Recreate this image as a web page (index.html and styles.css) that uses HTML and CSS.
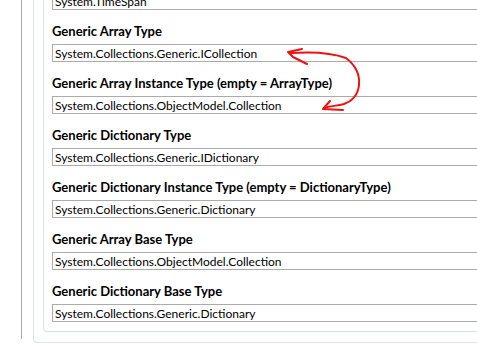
FILE: index.html
```html
<!DOCTYPE html>
<html lang="en">
<head>
    <meta charset="UTF-8">
    <title>Type Settings</title>
    <link rel="stylesheet" href="styles.css">
</head>
<body>
    <div class="rail">
        <div class="group">
            <div class="panel">
                <div class="field first">
                    <input class="type-box" type="text" value="System.TimeSpan">
                </div>
                <div class="field">
                    <label class="field-label">Generic Array Type</label>
                    <input class="type-box" type="text" value="System.Collections.Generic.ICollection">
                </div>
                <div class="field">
                    <label class="field-label">Generic Array Instance Type (empty = ArrayType)</label>
                    <input class="type-box" type="text" value="System.Collections.ObjectModel.Collection">
                </div>
                <div class="field">
                    <label class="field-label">Generic Dictionary Type</label>
                    <input class="type-box" type="text" value="System.Collections.Generic.IDictionary">
                </div>
                <div class="field">
                    <label class="field-label">Generic Dictionary Instance Type (empty = DictionaryType)</label>
                    <input class="type-box" type="text" value="System.Collections.Generic.Dictionary">
                </div>
                <div class="field">
                    <label class="field-label">Generic Array Base Type</label>
                    <input class="type-box" type="text" value="System.Collections.ObjectModel.Collection">
                </div>
                <div class="field">
                    <label class="field-label">Generic Dictionary Base Type</label>
                    <input class="type-box" type="text" value="System.Collections.Generic.Dictionary">
                </div>
            </div>
        </div>
    </div>

    <!-- hand drawn annotation on top of the form -->
    <svg class="scribble" width="477" height="347" viewBox="0 0 477 347">
        <path d="M302 49 L288 52 L293 57 L307 64" />
        <path d="M291 53 C306 52 330 52 346 58 C355 65 360 75 359 85 C358 95 352 101 344 104 C336 106 330 106 324 108" />
        <path d="M330 101 L323 109 L343 110" />
    </svg>
</body>
</html>
```

FILE: styles.css
```css
body {
    margin: 0;
    background-color: #fff;
    font-family: Lato, "Open Sans", sans-serif;
    font-size: 12px;
    color: #000;
    overflow: hidden;
    height: 347px;
    position: relative;
}
.rail {
    margin-left: 21px;
    border-left: 1px solid #a8a8a8;
    padding-left: 11px;
    height: 347px;
    box-sizing: border-box;
}
.group {
    border-left: 1px solid #dde2e6;
    border-bottom: 1px solid #dde2e6;
    border-bottom-left-radius: 4px;
    padding: 0 0 10px 9px;
}
.panel {
    border-left: 1px solid #dde2e6;
    border-bottom: 1px solid #dde2e6;
    border-bottom-left-radius: 4px;
    padding: 0 0 9px 8px;
}
.field {
    display: flex;
    flex-direction: column;
}
.field.first {
    margin-top: -8px;
}
.field-label {
    font-weight: bold;
    font-size: 13px;
    line-height: 16px;
    padding: 13px 0 5px;
}
.type-box {
    width: 480px;
    height: 18px;
    box-sizing: border-box;
    border: 1px solid #ababab;
    padding: 0 2px;
    margin: 0;
    font-family: inherit;
    font-size: 12px;
    color: #000;
    background-color: #fff;
    outline: none;
}

/* red annotation arrow */
.scribble {
    position: absolute;
    left: 0;
    top: 0;
    pointer-events: none;
}
.scribble path {
    fill: none;
    stroke: #ee1111;
    stroke-width: 2;
    stroke-linecap: round;
    stroke-linejoin: round;
}
```
